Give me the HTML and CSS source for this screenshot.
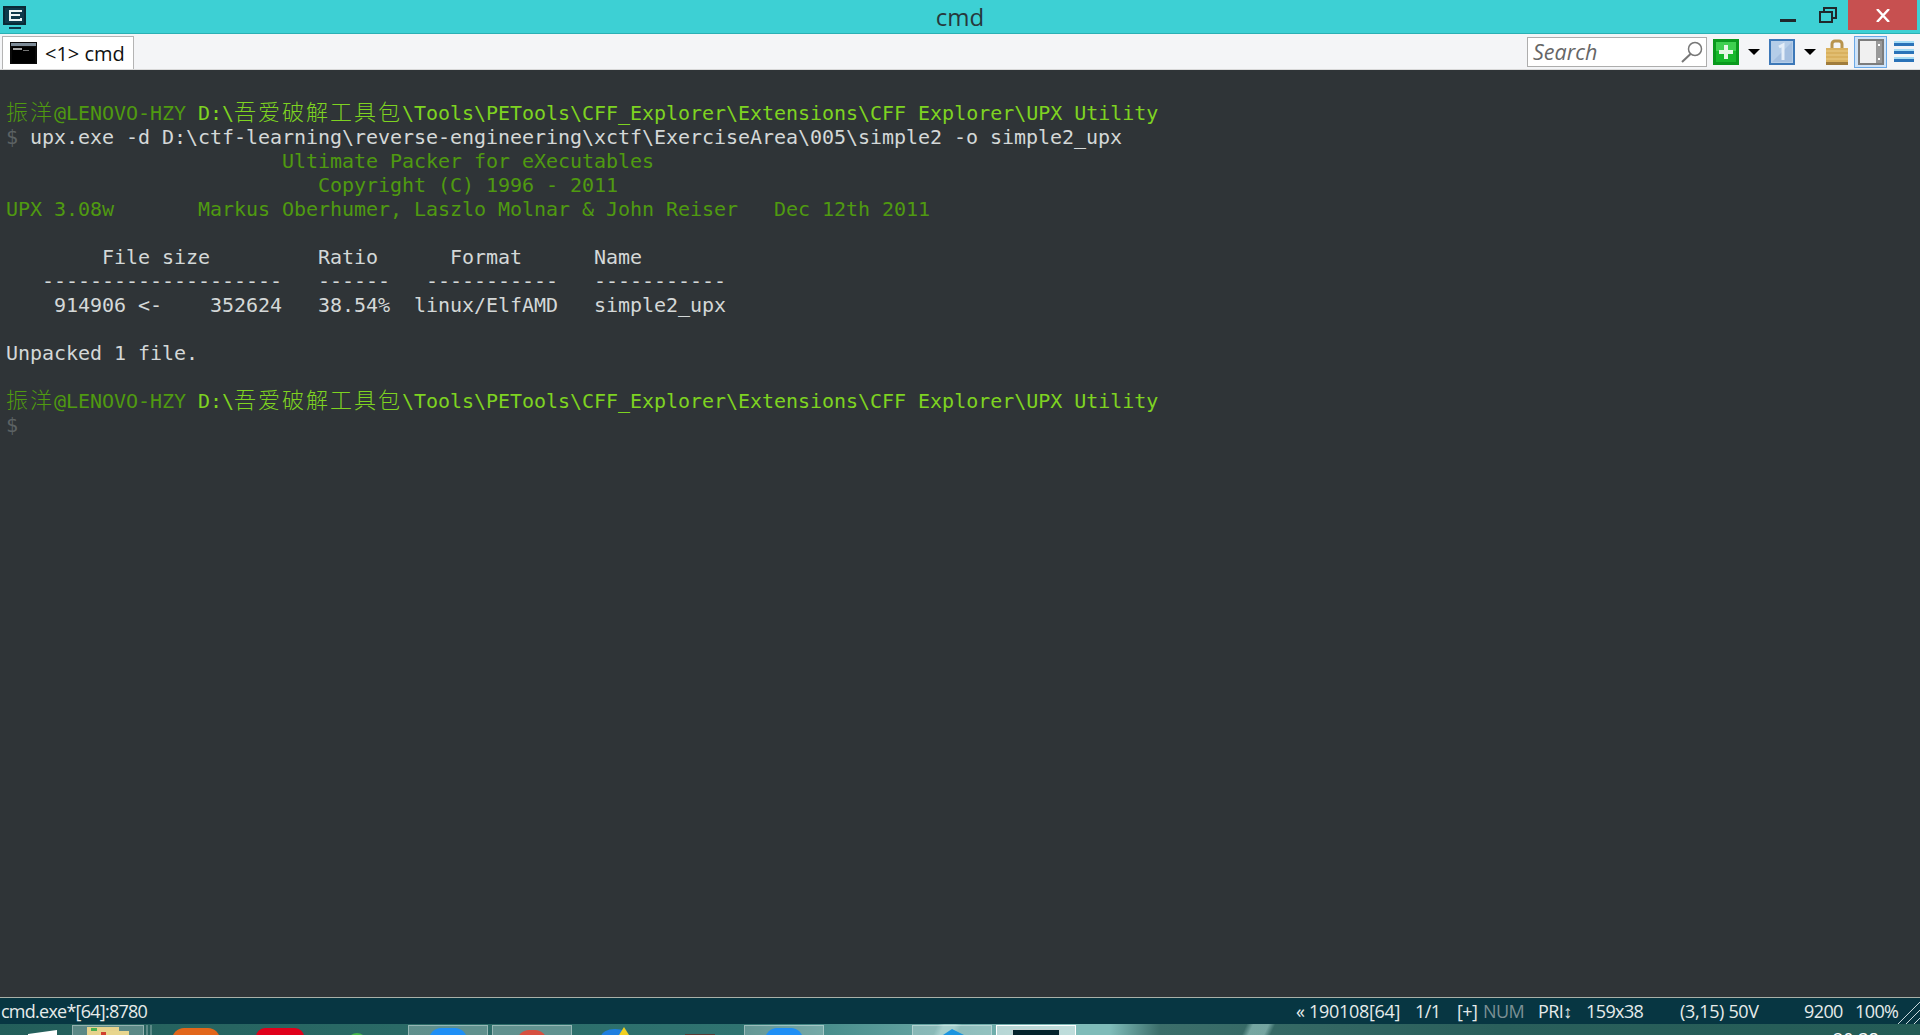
FILE: index.html
```html
<!DOCTYPE html>
<html lang="zh">
<head>
<meta charset="utf-8">
<title>cmd</title>
<link rel="stylesheet" href="styles.css">
</head>
<body>
<div class="window">
  <header class="titlebar">
    <svg class="app-icon" width="24" height="23" viewBox="0 0 24 23"><rect x="1" y="1" width="21" height="17" fill="#0e3a4a" stroke="#0a2a35" stroke-width="2"/><path d="M18 6V5H7v9h11v-2M7 9h10" stroke="#eef6f6" stroke-width="2" fill="none"/><rect x="6" y="21" width="12" height="2" fill="#0e3a4a"/></svg>
    <div class="title">cmd</div>
    <div class="win-controls">
      <span class="win-btn win-min"><svg width="16" height="3" viewBox="0 0 16 3"><rect width="16" height="3" fill="#20282c"/></svg></span>
      <span class="win-btn"><svg width="18" height="16" viewBox="0 0 18 16"><path d="M1 5h12v10H1zM5 4V1h12v10h-3" fill="none" stroke="#20282c" stroke-width="2"/></svg></span>
      <span class="win-close"><svg width="14" height="13" viewBox="0 0 14 13"><path d="M1 0l12 13M13 0L1 13" stroke="#fff" stroke-width="2.400"/></svg></span>
    </div>
  </header>
  <div class="toolbar">
    <div class="tab">
      <svg width="27" height="22" viewBox="0 0 27 22"><rect width="27" height="22" fill="#0a0a0a"/><rect x="1" y="1" width="25" height="3" fill="#7c8a96"/><rect x="2" y="5" width="23" height="16" fill="#000"/><rect x="3" y="6" width="9" height="2" fill="#aaa"/><rect x="13" y="8" width="6" height="1" fill="#777"/></svg>
      <span>&lt;1&gt; cmd</span>
    </div>
    <div class="tools">
      <div class="search"><span>Search</span><svg width="24" height="24" viewBox="0 0 24 24"><circle cx="15" cy="9" r="6.500" fill="none" stroke="#777" stroke-width="1.500"/><path d="M10.500 14L2 22" stroke="#777" stroke-width="2"/></svg></div>
      <svg class="plus" width="26" height="26" viewBox="0 0 26 26"><rect width="26" height="26" fill="#0a9a1e"/><rect x="3" y="3" width="20" height="20" fill="#17b82c"/><rect x="3" y="3" width="20" height="9" fill="#3fd050"/><path d="M13 6v14M6 13h14" stroke="#e6f7e6" stroke-width="4"/></svg>
      <i class="caret"></i>
      <svg class="one" width="26" height="26" viewBox="0 0 26 26"><rect x="1" y="1" width="24" height="24" fill="#b5cde8" stroke="#3d78b8" stroke-width="2"/><path d="M3 23L23 3v20z" fill="#a4bfe0"/><path d="M10 8l4-2v15" stroke="#e4eef8" stroke-width="3" fill="none"/></svg>
      <i class="caret"></i>
      <svg class="lock" width="22" height="26" viewBox="0 0 22 26"><path d="M6 11V5a3 3 0 0 1 3-3h4a3 3 0 0 1 3 3v6" fill="none" stroke="#b8944e" stroke-width="3"/><rect y="9" width="22" height="17" fill="#d9b15f"/><path d="M0 12h22M0 16h22M0 20h22" stroke="#eacb85"/><rect y="23" width="22" height="3" fill="#a07c3c"/></svg>
      <span class="pane-btn"><svg width="26" height="26" viewBox="0 0 26 26"><rect x="1" y="1" width="24" height="24" fill="#f0f0f0" stroke="#7c7c7c" stroke-width="2"/><rect x="18" y="2" width="6" height="22" fill="#999"/><rect x="20" y="5" width="2" height="2" fill="#fff"/><rect x="20" y="19" width="2" height="2" fill="#fff"/></svg></span>
      <svg class="menu" width="20" height="21" viewBox="0 0 20 21"><path d="M0 1h20M0 9h20M0 17h20" stroke="#a6dcf6" stroke-width="2"/><path d="M0 3.500h20M0 11.500h20M0 19.500h20" stroke="#2a72b8" stroke-width="3"/></svg>
    </div>
  </div>
  <main class="terminal"><pre class="console"><span class="dg"><span class="cjk">振洋</span>@LENOVO-HZY</span> <span class="lg">D:\<span class="cjk">吾爱破解工具包</span>\Tools\PETools\CFF_Explorer\Extensions\CFF Explorer\UPX Utility</span>
<span class="dim">$</span> upx.exe -d D:\ctf-learning\reverse-engineering\xctf\ExerciseArea\005\simple2 -o simple2_upx
<span class="dg">                       Ultimate Packer for eXecutables
                          Copyright (C) 1996 - 2011
UPX 3.08w       Markus Oberhumer, Laszlo Molnar &amp; John Reiser   Dec 12th 2011</span>

        File size         Ratio      Format      Name
   --------------------   ------   -----------   -----------
    914906 &lt;-    352624   38.54%  linux/ElfAMD   simple2_upx

Unpacked 1 file.

<span class="dg"><span class="cjk">振洋</span>@LENOVO-HZY</span> <span class="lg">D:\<span class="cjk">吾爱破解工具包</span>\Tools\PETools\CFF_Explorer\Extensions\CFF Explorer\UPX Utility</span>
<span class="dim">$</span></pre></main>
  <footer class="statusbar">
    <span class="st-left">cmd.exe*[64]:8780</span>
    <div class="st-right">
      <span class="s1">« 190108[64]</span><span class="s2">1/1</span><span class="s3">[+]</span><span class="s4">NUM</span><span class="s5">PRI↕</span><span class="s6">159x38</span><span class="s7">(3,15) 50V</span><span class="s8">9200</span><span class="s9">100%</span>
      <svg class="grip" width="22" height="26" viewBox="0 0 22 26"><path d="M0 26L22 4M8 26L22 12M16 26l6-6" stroke="#c8d8dc" stroke-width="1"/></svg>
    </div>
  </footer>
  <div class="taskbar">
    <svg class="start" width="72" height="11" viewBox="0 0 72 11"><path d="M28 10L57 6v5H28z" fill="#fff"/></svg>
    <span class="tile first"><svg width="42" height="10" viewBox="0 0 42 10"><rect x="0" y="1" width="32" height="9" fill="#e6d28c"/><rect x="4" y="2" width="6" height="3" fill="#4caf50"/><rect x="12" y="5" width="30" height="5" fill="#e8d68e"/><rect x="14" y="6" width="5" height="3" fill="#d04030"/></svg></span>
    <i class="sep"></i>
    <span class="tile ghost"><i class="ic orange"></i></span>
    <span class="tile ghost"><i class="ic red"></i></span>
    <span class="tile ghost"><i class="ic green"></i></span>
    <span class="tile"><i class="ic blue"></i></span>
    <span class="tile"><i class="ic cred"></i></span>
    <span class="tile ghost"><svg class="star" width="30" height="10" viewBox="0 0 30 10"><path d="M0 10a14 8 0 0 1 28 0z" fill="#1e7fe0"/><path d="M23 0l5 8h-10z" fill="#f0d020"/></svg></span>
    <span class="tile ghost"><i class="ic dark"></i></span>
    <span class="tile"><i class="ic blue"></i></span>
    <span class="tile ghost"></span>
    <span class="tile"><svg class="kite" width="24" height="10" viewBox="0 0 24 10"><path d="M12 2L24 8v2H0z" fill="#1b95e0"/></svg></span>
    <span class="tile active"><i class="ic cmd"></i></span>
    <span class="clock">20:38</span>
  </div>
</div>
</body>
</html>
```
FILE: styles.css
```css
html, body { margin: 0; padding: 0; height: 100%; overflow: hidden; }
.window { display: flex; flex-direction: column; height: 1035px; width: 1920px; background: #2f3437; }

.titlebar { box-sizing: border-box; height: 34px; flex: none; display: flex; align-items: flex-start; position: relative; background: #3dd0d4; border-bottom: 1px solid #2bb0b4; }
.app-icon { margin: 6px 0 0 3px; }
.title { position: absolute; left: 0; right: 0; top: 3px; text-align: center; font: 24px/28px "Open Sans", "Noto Sans", sans-serif; color: #27383c; }
.win-controls { margin-left: auto; display: flex; margin-right: 3px; }
.win-btn { width: 40px; height: 30px; display: flex; align-items: center; justify-content: center; }
.win-min { box-sizing: border-box; padding-top: 11px; }
.win-close { width: 69px; height: 30px; display: flex; align-items: center; justify-content: center; background: #c75050; }

.toolbar { box-sizing: border-box; height: 36px; flex: none; display: flex; justify-content: space-between; background: #f4f5f7; border-bottom: 1px solid #d8d8d8; }
.tab { margin: 2px 0 0 2px; box-sizing: border-box; width: 132px; display: flex; align-items: center; gap: 8px; padding: 0 0 0 7px; background: #fff; border: 1px solid #b4b4b4; border-bottom: 0; font: 20px "Open Sans", "Noto Sans", sans-serif; color: #111; }
.tools { display: flex; align-items: center; margin-right: 6px; }
.search { box-sizing: border-box; width: 180px; height: 30px; display: flex; align-items: center; justify-content: space-between; padding: 0 2px 0 5px; background: #fff; border: 1px solid #adadad; font: italic 21.5px "Open Sans", "Noto Sans", sans-serif; color: #666; margin-right: 6px; }
.plus { margin-right: 9px; }
.caret { width: 0; height: 0; border-left: 6px solid transparent; border-right: 6px solid transparent; border-top: 6px solid #000; }
.one { margin: 0 9px; }
.lock { margin: 0 6px 0 10px; }
.pane-btn { box-sizing: border-box; width: 33px; height: 32px; display: flex; align-items: center; justify-content: center; background: #cfe3f8; border: 1px solid #6aa8e6; margin-right: 7px; }

.terminal { flex: 1; min-height: 0; padding: 31px 0 0 6px; border-bottom: 1px solid #a9b0a8; background: #2f3437; }
.console { margin: 0; font: 20px/24px "DejaVu Sans Mono", monospace; letter-spacing: -0.04px; color: #d4d8d8; }
.dg { color: #4f9a10; }
.lg { color: #7ed321; }
.dim { color: #5c6264; }
.cjk { font-family: "Noto Sans CJK SC", sans-serif; font-size: 22px; line-height: 0; letter-spacing: 2px; font-weight: 300; }

.statusbar { box-sizing: border-box; height: 26px; flex: none; display: flex; justify-content: space-between; align-items: center; padding-top: 1px; background: #073642; color: #e6ebea; font: 18px/25px "Open Sans", "Noto Sans", sans-serif; letter-spacing: -0.6px; }
.st-left { margin-left: 1px; letter-spacing: -0.75px; }
.st-right { display: flex; align-items: center; position: relative; }
.st-right span { white-space: nowrap; display: block; }
.s1 { width: 119px; letter-spacing: -0.3px; }
.s2 { width: 42px; }
.s3 { width: 26px; }
.s4 { width: 55px; color: #7b9094; }
.s5 { width: 48px; }
.s6 { width: 94px; }
.s7 { width: 124px; letter-spacing: -0.35px; }
.s8 { width: 51px; }
.s9 { width: 65px; }
.grip { position: absolute; right: 0; top: -1px; }

.taskbar { height: 11px; flex: none; display: flex; align-items: flex-start; overflow: hidden; position: relative; background: linear-gradient(115deg, transparent 0 850px, rgba(180, 225, 220, .45) 856px 866px, transparent 872px 1130px, rgba(180, 225, 220, .5) 1136px 1150px, transparent 1156px), linear-gradient(90deg, #235e5a 0, #2a6a66 400px, #2f7370 740px, #4a8f8d 830px, #5f9f9d 910px, #7fbcb9 1076px, #7fbcb9 1110px, #3b6e6a 1160px, #2a5f5b 1500px, #245c56 1920px); }
.start { flex: none; }
.tile { box-sizing: border-box; flex: none; width: 80px; height: 10px; margin: 1px 4px 0 0; display: flex; justify-content: center; overflow: hidden; background: rgba(255, 255, 255, .25); border: 1px solid rgba(255, 255, 255, .35); border-bottom: 0; }
.first { width: 72px; margin-right: 2px; }
.ghost { background: none; border-color: transparent; }
.active { background: rgba(255, 255, 255, .5); border-color: #fff; }
.sep { flex: none; box-sizing: border-box; width: 6px; height: 10px; margin: 1px 4px 0 0; border-left: 2px solid rgba(255, 255, 255, .25); border-right: 2px solid rgba(255, 255, 255, .25); }
.ic { display: block; flex: none; width: 48px; height: 12px; margin-top: 2px; border-radius: 14px 14px 0 0; }
.orange { background: #e2661a; }
.red { background: #e0001b; border-radius: 9px 9px 0 0; }
.green { width: 20px; background: #45b649; margin: 7px 14px 0 0; }
.blue { width: 38px; background: #1f8ff5; }
.cred { width: 30px; background: #d65040; margin-top: 4px; }
.star { flex: none; margin-top: 1px; }
.dark { width: 30px; height: 2px; background: #5a3a34; margin-top: 8px; border-radius: 0; }
.kite { flex: none; margin-top: 1px; }
.cmd { box-sizing: border-box; height: 12px; margin-top: 3px; border-radius: 0; background: #03232c; border: 1px solid #c4d4d4; }
.clock { position: absolute; left: 1833px; top: 3px; font: 18px "Open Sans", sans-serif; color: #fff; }
```
